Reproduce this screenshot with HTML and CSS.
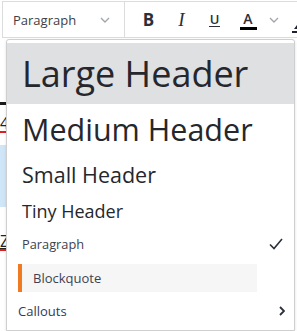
FILE: index.html
```html
<!DOCTYPE html>
<html lang="en">
<head>
    <meta charset="UTF-8">
    <meta name="viewport" content="width=device-width, initial-scale=1.0">
    <title>Editor format menu</title>
    <link rel="stylesheet" href="styles.css">
</head>
<body>
    <div class="editor">
        <div class="toolbar">
            <div class="block-select">
                <span class="block-label">Paragraph</span>
                <svg class="chevron" width="10" height="6" viewBox="0 0 10 6"><polyline points="1,1 5,5 9,1" /></svg>
            </div>
            <button class="tool tool-bold">B</button>
            <button class="tool tool-italic">I</button>
            <button class="tool tool-underline"><span>U</span></button>
            <button class="tool tool-color"><span class="color-letter">A</span><span class="color-bar"></span></button>
            <button class="tool tool-more">
                <svg class="chevron" width="10" height="6" viewBox="0 0 10 6"><polyline points="1,1 5,5 9,1" /></svg>
            </button>
            <button class="tool tool-highlight">
                <svg width="14" height="16" viewBox="0 0 14 16"><polygon points="2,12 8,4 12,12" /><rect x="0" y="14" width="14" height="2" /></svg>
            </button>
        </div>

        <div class="page">
            <div class="page-rule"></div>
            <div class="page-glyph">4</div>
            <div class="page-squiggle"></div>
            <div class="page-selection"></div>
            <div class="page-glyph page-glyph-z">Z</div>
            <div class="page-squiggle"></div>
            <div class="page-dark"></div>
        </div>

        <div class="format-menu">
            <div class="menu-item item-large is-hover">Large Header</div>
            <div class="menu-item item-medium">Medium Header</div>
            <div class="menu-item item-small">Small Header</div>
            <div class="menu-item item-tiny">Tiny Header</div>
            <div class="menu-item item-paragraph">
                <span>Paragraph</span>
                <svg class="check" width="14" height="12" viewBox="0 0 14 12"><polyline points="1,6.5 5,10.5 13,1" /></svg>
            </div>
            <div class="menu-item item-quote"><span class="quote-box">Blockquote</span></div>
            <div class="menu-item item-callouts">
                <span>Callouts</span>
                <svg class="chevron-right" width="6" height="10" viewBox="0 0 6 10"><polyline points="1,1 5,5 1,9" /></svg>
            </div>
        </div>
    </div>
</body>
</html>
```

FILE: styles.css
```css
html, body {
    margin: 0;
    padding: 0;
    background: #fff;
}
body {
    font-family: 'Open Sans', 'Noto Sans', sans-serif;
    color: #2b2f3a;
    width: 297px;
    height: 331px;
    overflow: hidden;
}
.editor {
    position: relative;
    height: 331px;
}
.toolbar {
    display: flex;
    align-items: stretch;
    height: 35px;
    margin: 1px 0 0 2px;
    border-top: 1px solid #dcdcdc;
    border-left: 1px solid #dcdcdc;
    border-bottom: 1px solid #dcdcdc;
}
.block-select {
    display: flex;
    flex-shrink: 0;
    align-items: center;
    justify-content: space-between;
    width: 122px;
    box-sizing: border-box;
    padding: 0 14px 0 10px;
    border-right: 1px solid #dcdcdc;
}
.block-label {
    font-size: 13px;
    color: #3b3f4a;
}
.chevron polyline,
.chevron-right polyline {
    fill: none;
    stroke: #a3a7ad;
    stroke-width: 1.4;
}
.tool {
    display: flex;
    flex-direction: column;
    flex-shrink: 0;
    align-items: center;
    justify-content: center;
    width: 33px;
    padding: 0;
    border: none;
    background: none;
    color: #2b2f3a;
    font-family: 'Open Sans', sans-serif;
}
.tool-bold {
    margin-left: 7px;
    font-size: 17px;
    font-weight: 700;
}
.tool-italic {
    font-family: 'Liberation Serif', serif;
    font-style: italic;
    font-size: 19px;
}
.tool-underline span {
    font-size: 13px;
    font-weight: 600;
    line-height: 13px;
    border-bottom: 1.5px solid #2b2f3a;
    padding: 0 1px;
}
.tool-color {
    width: 34px;
    padding-top: 3px;
}
.color-letter {
    font-size: 14px;
    font-weight: 600;
    line-height: 14px;
}
.color-bar {
    width: 17px;
    height: 3px;
    margin-top: 1px;
    background: #000;
}
.tool-more {
    width: 18px;
}
.tool-highlight {
    width: 16px;
    margin-left: 8px;
    padding-top: 10px;
}
.tool-highlight svg {
    fill: #1e2230;
}
.page {
    display: flex;
    flex-direction: column;
    width: 6px;
}
.page-rule {
    height: 3px;
    margin-top: 64px;
    background: #1a1a1a;
}
.page-glyph {
    height: 12px;
    margin-top: 12px;
    font-size: 16px;
    line-height: 12px;
    color: #222;
}
.page-squiggle {
    height: 2px;
    margin-top: 2px;
    background: #e02020;
}
.page-selection {
    height: 62px;
    margin-top: 12px;
    background: #cfe6f8;
}
.page-glyph-z {
    margin-top: 28px;
    text-decoration: underline;
}
.page-dark {
    flex: 1;
    height: 66px;
    margin-top: 12px;
    background: #141414;
}
.format-menu {
    position: absolute;
    top: 38px;
    left: 6px;
    width: 289px;
    height: 292px;
    box-sizing: border-box;
    padding-top: 3px;
    background: #fff;
    border: 1px solid #cfcfcf;
    border-radius: 3px 3px 0 0;
    box-shadow: 0 1px 3px rgba(0, 0, 0, 0.12);
    display: flex;
    flex-direction: column;
}
.menu-item {
    display: flex;
    align-items: center;
    justify-content: space-between;
    padding: 0 12px 0 15px;
    color: #25272d;
    white-space: nowrap;
}
.is-hover {
    background: #dfe0e2;
}
.item-large {
    height: 61px;
    font-size: 36px;
}
.item-medium {
    height: 50px;
    font-size: 30.5px;
}
.item-small {
    height: 40px;
    font-size: 21.5px;
}
.item-tiny {
    height: 34px;
    font-size: 18px;
}
.item-paragraph {
    height: 32px;
    font-size: 12.8px;
    color: #3e4250;
    padding-right: 11px;
}
.check polyline {
    fill: none;
    stroke: #2b2f3a;
    stroke-width: 1.6;
}
.item-quote {
    height: 28px;
    margin-top: 4px;
    padding-left: 11px;
}
.quote-box {
    display: flex;
    align-items: center;
    width: 239px;
    height: 28px;
    box-sizing: border-box;
    padding-left: 11px;
    border-left: 4px solid #f07a22;
    background: #f6f6f6;
    font-size: 13px;
    color: #3e4250;
}
.item-callouts {
    height: 30px;
    margin-top: 4px;
    padding-left: 11px;
    padding-right: 9px;
    font-size: 13px;
    color: #34385a;
}
.chevron-right polyline {
    stroke: #2b2f3a;
    stroke-width: 1.8;
}
```
